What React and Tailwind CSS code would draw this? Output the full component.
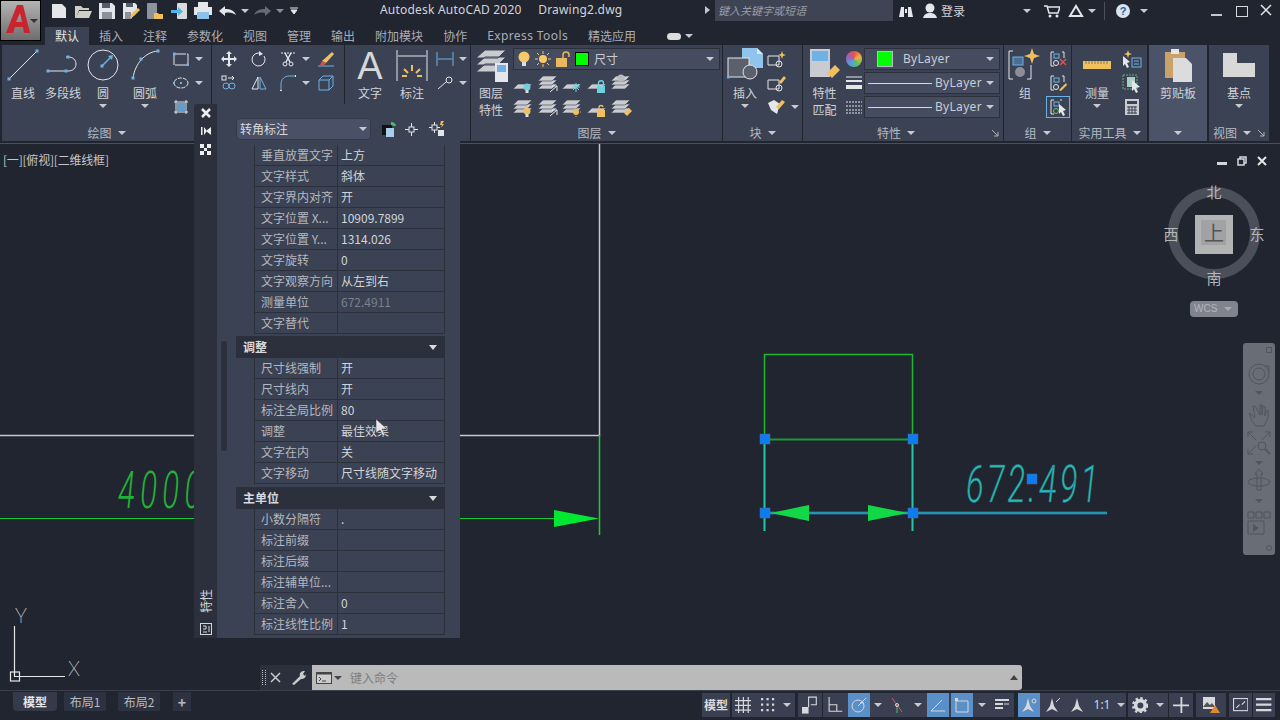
import React from 'react'

const W = '#e4e6ea'
const B = '#6fb1e6'
const Y = '#f0c060'

function S({ w = 20, h = 20, z = 1, children }) {
    return <svg width={w * z} height={h * z} viewBox={`0 0 ${w} ${h}`} fill="none" className="block shrink-0">{children}</svg>
}

function Arrow({ className = 'border-t-[#c8cad0]' }) {
    return <span className={`block w-0 h-0 border-x-[4px] border-x-transparent border-t-[4px] ${className}`} />
}

function Grip({ x, y, s = 3 }) {
    return <rect x={x - s / 2} y={y - s / 2} width={s} height={s} fill={B} />
}

// ----- quick access icons
const qa = [
    <S w={18} h={16}><path d="M2 1h10l4 4v10H2z" fill={W} /></S>,
    <S w={18} h={16}><path d="M1 3h6l2 2h6v2H5l-3 8H1zM5 8h13l-3 7H2z" fill="#cfcfc4" /></S>,
    <S w={18} h={18}><path d="M1 1h13l3 3v13H1z" fill={W} /><rect x="4" y="1" width="8" height="5" fill="#555c6c" /><rect x="4" y="10" width="10" height="7" fill="#8b909b" /></S>,
    <S w={18} h={18}><path d="M1 1h12l2 2v6l-6 8H1z" fill={W} /><rect x="4" y="1" width="7" height="4" fill="#555c6c" /><rect x="3" y="10" width="6" height="7" fill="#8b909b" /><path d="M8 16l2-5 6-5 2 2-6 6z" fill={Y} /></S>,
    <S w={18} h={18}><rect x="1" y="1" width="10" height="16" rx="1" fill="#8d929c" /><path d="M8 11h4l1 1h4v5H8z" fill={Y} /></S>,
    <S w={18} h={18}><rect x="7" y="1" width="10" height="16" rx="1" fill="#d8dadd" /><path d="M1 8h7V5l5 4.500-5 4.500v-3H1z" fill="#55b5e8" /></S>,
    <S w={18} h={18}><rect x="4" y="0" width="10" height="5" fill={W} /><rect x="0" y="5" width="18" height="8" fill={W} /><rect x="3" y="10" width="12" height="7" fill="#8ac2ec" /></S>,
]

function TitleBar() {
    return (
        <div className="h-[27px] flex items-start text-[#d2d4d8] relative">
            <div className="w-[41px] h-[41px] bg-gradient-to-b from-[#b4b4b4] to-[#6e6e6e] border border-black relative z-10 pl-[4px] pt-[3px]">
                <S w={26} h={30}><path d="M1 29L12 1h6l7 28h-6l-1-6h-8l-2 6zM11 18h6l-2-9z" fill="#c8252e" /></S>
                <span className="absolute right-[2px] top-[18px]"><Arrow className="border-t-[#333]" /></span>
            </div>
            <div className="flex items-center h-[21px] ml-[9px] gap-[6px]">{qa}</div>
            <div className="flex items-center h-[21px] ml-[7px] gap-[5px]">
                <S w={17} h={12}><path d="M0 6l6-5v3c5 0 9 1 11 6-3-2-6-3-11-2v3z" fill={W} /></S>
                <Arrow />
                <S w={17} h={12}><path d="M17 6l-6-5v3C6 4 2 5 0 10c3-2 6-3 11-2v3z" fill="#656a77" /></S>
                <Arrow className="border-t-[#8a8d95]" />
                <S w={10} h={10}><path d="M1 2h8M2 4h6L5 8z" stroke={W} fill={W} /></S>
            </div>
            <div className="absolute left-[380px] top-[1px] text-xs leading-[18px] tracking-[0.2px] font-['Noto_Sans',sans-serif] whitespace-pre">Autodesk AutoCAD 2020     Drawing2.dwg</div>
            <div className="absolute left-[705px] top-[6px] w-0 h-0 border-y-[4px] border-y-transparent border-l-[5px] border-l-[#c4c6cc]" />
            <div className="absolute left-[715px] top-0 w-[178px] h-[21px] bg-[#3e4453] pl-[3px] text-[11px] leading-[21px] italic text-[#9a9da5]">键入关键字或短语</div>
            <div className="absolute left-[898px] top-[3px] flex items-center h-[16px]">
                <S w={16} h={14}><path d="M1 13l2-10h3v10zM15 13l-2-10h-3v10zM7 5h2v4H7z" fill={W} /></S>
                <span className="ml-[8px]"><S w={16} h={16}><circle cx="8" cy="5" r="4.500" fill={W} /><path d="M1 15c1-4 4-5 7-5s6 1 7 5z" fill={W} /></S></span>
                <span className="ml-[3px] text-xs">登录</span>
                <span className="ml-[58px]"><Arrow /></span>
                <span className="ml-[13px]"><S w={16} h={14}><path d="M0 2h3l2 7h9l2-6H4" stroke={W} strokeWidth="1.500" /><circle cx="6" cy="12" r="1.500" fill={W} /><circle cx="13" cy="12" r="1.500" fill={W} /></S></span>
                <span className="ml-[8px]"><S w={16} h={14}><path d="M8 2L2 12h12z" stroke={W} strokeWidth="2" /></S></span>
                <span className="ml-[4px]"><Arrow /></span>
                <span className="ml-[8px] w-px h-[18px] bg-[#4a4f5c]" />
                <span className="ml-[11px] w-[14px] h-[14px] rounded-full bg-[#d8e4f2] text-[#2d5a9a] text-[11px] leading-[14px] font-bold text-center font-['Liberation_Sans',sans-serif]">?</span>
                <span className="ml-[10px]"><Arrow /></span>
            </div>
            <div className="absolute left-[1211px] top-[14px] w-[11px] h-[2px] bg-[#c4c6cc]" />
            <div className="absolute left-[1236px] top-[6px] w-[12px] h-[11px] border-[1.500px] border-[#d6d8dc]" />
            <div className="absolute left-[1259px] top-[3px]"><S w={14} h={14}><path d="M2 2l10 10M12 2L2 12" stroke={W} strokeWidth="1.500" /></S></div>
        </div>
    )
}

function TabBar() {
    const tabs = ['默认', '插入', '注释', '参数化', '视图', '管理', '输出', '附加模块', '协作', 'Express Tools', '精选应用']
    return (
        <div className="h-[18px] flex pl-[45px] text-xs leading-[18px] text-[#a9adb6]">
            {tabs.map((t, i) => (
                <div key={t} className={i === 0 ? 'px-[10px] bg-[#3b4253] text-[#e0e2e6]' : t === 'Express Tools' ? "px-[10px] font-['Noto_Sans',sans-serif] tracking-[0.4px]" : 'px-[10px]'}>{t}</div>
            ))}
            <div className="ml-[21px] flex items-center gap-[4px]">
                <span className="w-[14px] h-[7px] rounded-sm bg-[#dcdcdc]" />
                <Arrow />
            </div>
        </div>
    )
}

function Panel({ className, title, corner, children }) {
    return (
        <section className={`h-[96px] bg-[#3b4253] flex flex-col shrink-0 ${className}`}>
            <div className="h-[80px] flex overflow-hidden">{children}</div>
            <div className={corner ? 'h-[16px] flex items-center justify-center gap-[6px] text-xs leading-[16px] text-[#b6b9c0] relative pr-[14px]' : 'h-[16px] flex items-center justify-center gap-[6px] text-xs leading-[16px] text-[#b6b9c0] relative'}>
                {title && <span>{title}</span>}
                <Arrow />
                {corner && <span className="absolute right-[4px] top-[5px]"><S w={7} h={7}><path d="M0 0l6 6M6 2v4H2" stroke="#aeb1b8" /></S></span>}
            </div>
        </section>
    )
}

function Big({ className, icon, label, label2, dd }) {
    return (
        <div className={`flex flex-col items-center shrink-0 text-xs text-[#d0d2d7] ${className}`}>
            <div className="h-[40px] flex items-center justify-center">{icon}</div>
            <div className="h-[16px] leading-[16px] whitespace-nowrap">{label}</div>
            {label2 && <div className="h-[17px] leading-[17px] whitespace-nowrap">{label2}</div>}
            {dd && <div className="h-[10px] flex items-center"><Arrow /></div>}
        </div>
    )
}

function Sm({ children, dd, on }) {
    return (
        <div className="h-[24px] flex items-center relative">
            <div className={on ? 'w-[24px] h-[22px] flex items-center justify-center border border-[#6fb1e6]' : 'w-[24px] h-[22px] flex items-center justify-center'}>{children}</div>
            {dd && <span className="ml-[2px]"><Arrow /></span>}
        </div>
    )
}

// small stacked layer sheet used on the layer panel
function Sheets({ extra, n = 3 }) {
    return (
        <S w={22} h={20}>
            {Array.from({ length: n }).map((_, i) => <path key={i} d={`M1 ${15 - i * 4}L6 ${10 - i * 4}h14L15 ${15 - i * 4}z`} fill="#c9cbd0" stroke="#3b4253" strokeWidth=".6" />)}
            {extra}
        </S>
    )
}

const bulb = (c, x = 15, y = 13) => <g><circle cx={x} cy={y} r="3.500" fill={c} /><rect x={x - 1.500} y={y + 3} width="3" height="3" fill="#ddd" /></g>
const lock = (c, open) => <g><rect x="11" y="12" width="8" height="7" fill={c} /><path d={open ? 'M13 12V9c0-2 4-2 4 0' : 'M12.500 12V9c0-3 5-3 5 0v3'} stroke={c} strokeWidth="1.300" /></g>

function Combo({ className, children }) {
    return <div className={`flex items-center bg-[#454c60] border border-[#2c303b] text-xs text-[#c9ccd2] relative ${className}`}>{children}<span className="absolute right-[5px] top-[8px]"><Arrow /></span></div>
}

function LineRow({ label }) {
    return (
        <Combo className="w-[136px] h-[22px] mb-[2px] pl-[3px]">
            <span className="w-[64px] h-px bg-[#d8dade]" />
            <span className="ml-[3px] font-['Noto_Sans',sans-serif] tracking-[0.3px]">{label}</span>
        </Combo>
    )
}

function Ribbon() {
    return (
        <div className="h-[99px] flex gap-px pl-[2px] border-b border-[#4a4f5c]">
            <Panel className="w-[209px]" title="绘图">
                <Big className="w-[42px]" label="直线" icon={<S w={34} h={34}><path d="M3 31L31 3" stroke={W} /><Grip x={3} y={31} /><Grip x={31} y={3} /></S>} />
                <Big className="w-[38px]" label="多段线" icon={<S w={34} h={24}><path d="M2 18h18M20 18h2c5 0 8-3 8-7s-3-7-8-7h-2" stroke={W} /><Grip x={2} y={18} /><Grip x={20} y={18} /><Grip x={22} y={4} /></S>} />
                <Big className="w-[42px]" label="圆" dd icon={<S w={34} h={34}><circle cx="17" cy="17" r="15" stroke={W} /><path d="M16 18l9-9" stroke={B} strokeWidth="1.500" /><path d="M27 7l-5 1 4 4z" fill={B} /><Grip x={16} y={18} /></S>} />
                <Big className="w-[42px]" label="圆弧" dd icon={<S w={32} h={34}><path d="M4 30C6 16 16 4 29 3" stroke={W} /><Grip x={4} y={30} /><Grip x={12} y={11} /><Grip x={29} y={3} /></S>} />
                <div className="ml-[3px] pt-[2px]">
                    <Sm dd><S w={16} h={14}><path d="M1 2h14v11H1z" stroke={W} strokeDasharray="12 1" /><Grip x={1} y={2} /><Grip x={15} y={13} /></S></Sm>
                    <Sm dd><S w={16} h={12}><ellipse cx="8" cy="6" rx="7" ry="5" stroke={W} strokeDasharray="4 1" /><Grip x={8} y={6} s={2} /><Grip x={1} y={6} s={2} /></S></Sm>
                    <Sm><S w={16} h={16}><path d="M1 3h14M1 13h14M3 1v14M13 1v14" stroke={W} /><rect x="4" y="4" width="8" height="8" fill={B} opacity=".8" /></S></Sm>
                </div>
            </Panel>
            <Panel className="w-[132px]">
                <div className="grid grid-cols-[30px_30px_38px_28px] content-start pl-[2px] pt-[2px] justify-items-center">
                    <Sm><S w={16} h={16}><path d="M8 0l3 3H9v4h4V5l3 3-3 3V9H9v4h2l-3 3-3-3h2V9H3v2L0 8l3-3v2h4V3H5z" fill={W} /></S></Sm>
                    <Sm><S w={16} h={16}><path d="M13 5a6.500 6.500 0 1 1-3-2.500" stroke={W} /><path d="M8 0l4 3-4 2z" fill={W} /></S></Sm>
                    <Sm dd><S w={16} h={16}><path d="M1 2h14" stroke={W} strokeDasharray="2 1" /><path d="M5 2l5 9M11 2L6 11" stroke={W} strokeWidth="1.500" /><circle cx="5" cy="13" r="2" stroke={W} /><circle cx="11" cy="13" r="2" stroke={W} /></S></Sm>
                    <Sm><S w={16} h={16}><path d="M14 1l2 2-8 9-4-2z" fill={Y} /><path d="M4 10l4 2-2 2H2z" fill="#d8534a" /><path d="M0 15h16" stroke={B} /></S></Sm>
                    <Sm><S w={16} h={16}><circle cx="5" cy="11" r="3" stroke={B} /><circle cx="11" cy="11" r="3" stroke={B} /><rect x="1" y="1" width="4" height="4" stroke={W} /><path d="M7 3h6l-2-2M13 3l-2 2" stroke={W} /></S></Sm>
                    <Sm><S w={16} h={16}><path d="M7 2L1 14h6z" stroke={W} /><path d="M9 2l6 12H9z" stroke={B} /></S></Sm>
                    <Sm dd><S w={16} h={16}><path d="M1 15V9c0-5 4-8 8-8h6" stroke={B} /><path d="M1 15v1M15 1h1" stroke={W} strokeWidth="2" /></S></Sm>
                    <Sm><S w={16} h={16}><path d="M1 5h10v10H1zM1 5l4-4h10v10l-4 4M11 5l4-4" stroke={B} /></S></Sm>
                </div>
            </Panel>
            <Panel className="w-[125px]">
                <Big className="w-[50px]" label="文字" icon={<span className="self-end text-[#d6d7d9] text-[38px] leading-[38px] font-['Liberation_Sans',sans-serif]">A</span>} />
                <Big className="w-[34px]" label="标注" icon={<S w={32} h={32}><path d="M1 1v31M31 1v31M2 7h28" stroke={W} /><path d="M16 16v6M8 20l4 4M24 20l-4 4M6 27h5M21 27h5" stroke={Y} strokeWidth="2" /></S>} />
                <div className="ml-[4px] pt-[2px]">
                    <Sm dd><S w={18} h={14}><path d="M1 0v14M17 0v14M2 7h14" stroke={B} /></S></Sm>
                    <Sm dd><S w={18} h={16}><circle cx="13" cy="5" r="3" stroke={W} /><path d="M10 7l-8 7" stroke={W} /></S></Sm>
                </div>
            </Panel>
            <Panel className="w-[251px]" title="图层">
                <Big className="w-[40px]" label="图层" label2="特性" icon={<S w={34} h={34}><path d="M2 24l9-8h21l-8 8zM2 17l9-8h21l-8 8zM2 10l9-8h21l-8 8z" fill="#c9cbd0" stroke="#3b4253" /><rect x="21" y="15" width="13" height="19" fill={W} /><rect x="23" y="17" width="9" height="7" fill={B} /></S>} />
                <div className="ml-[2px] pt-[3px]">
                    <Combo className="w-[207px] h-[22px] pl-[3px] gap-[4px]">
                        <S w={14} h={16}><circle cx="7" cy="6" r="5.500" fill="#f5c96a" /><rect x="5" y="11" width="4" height="4" fill="#ddd" /></S>
                        <S w={16} h={16}><circle cx="8" cy="8" r="4" fill="#f5c96a" /><path d="M8 0v3M8 13v3M0 8h3M13 8h3M2 2l2 2M12 12l2 2M14 2l-2 2M2 14l2-2" stroke="#f5c96a" /></S>
                        <S w={16} h={16}><rect x="1" y="7" width="11" height="9" fill="#e8b860" /><path d="M8 7V4c0-4 6-4 6 0v2" stroke="#e8b860" strokeWidth="1.500" /></S>
                        <span className="w-[14px] h-[14px] bg-[#00ff00] border border-black" />
                        <span className="ml-[1px]">尺寸</span>
                    </Combo>
                    <div className="grid grid-cols-5 w-[123px] -ml-[2px] pt-[2px]">
                        <Sm><Sheets n={1} extra={bulb('#6fd0e0')} /></Sm>
                        <Sm><Sheets extra={<path d="M13 18l7-6M20 12v5M20 12h-5" stroke={W} />} /></Sm>
                        <Sm><Sheets n={1} extra={<path d="M15 9v9M11 13h8M12 10l6 6M18 10l-6 6" stroke="#6fd0e0" />} /></Sm>
                        <Sm><Sheets n={1} extra={lock('#6fd0e0')} /></Sm>
                        <Sm><Sheets extra={<circle cx="11" cy="4" r="3.500" fill="#b9bcc2" />} /></Sm>
                        <Sm><Sheets extra={bulb(Y)} /></Sm>
                        <Sm><Sheets extra={<path d="M13 18l7-6M20 12v5M20 12h-5" stroke={W} />} /></Sm>
                        <Sm><Sheets extra={<g><circle cx="15" cy="14" r="3" fill={Y} /><path d="M15 9v10M10 14h10" stroke={Y} strokeDasharray="1.500 1.500" /></g>} /></Sm>
                        <Sm><Sheets n={1} extra={lock(Y, true)} /></Sm>
                        <Sm><Sheets extra={<path d="M14 15l5-5 3 3-5 5z" fill={Y} />} /></Sm>
                    </div>
                </div>
            </Panel>
            <Panel className="w-[79px]" title="块">
                <Big className="w-[44px]" label="插入" dd icon={<S w={36} h={38}><path d="M15 2h15l6 6v14H15z" fill="#8fc4ec" /><path d="M30 2l6 6h-6z" fill="#d8e8f4" /><rect x="1" y="12" width="21" height="19" fill="#5b606c" stroke={W} /><circle cx="23" cy="26" r="7" fill="#5b606c" stroke={W} /><Grip x={1} y={31} /></S>} />
                <div className="-ml-[2px] pt-[2px]">
                    <Sm><S w={20} h={18}><path d="M1 6h11v9H1z" stroke={W} /><circle cx="12" cy="14" r="3" stroke={W} /><path d="M15 1l1 3 3 1-3 1-1 3-1-3-3-1 3-1z" fill={Y} /></S></Sm>
                    <Sm><S w={20} h={18}><path d="M1 6h11v9H1z" stroke={W} /><circle cx="12" cy="14" r="3" stroke={W} /><path d="M12 8l5-6 2 2-5 6z" fill={Y} /></S></Sm>
                    <Sm dd><S w={20} h={18}><path d="M1 5l6-3 6 4-3 10-6-4z" fill={W} /><path d="M9 9l6-7 3 2-6 7z" fill={Y} /></S></Sm>
                </div>
            </Panel>
            <Panel className="w-[200px]" title="特性" corner>
                <Big className="w-[43px]" label="特性" label2="匹配" icon={<S w={32} h={32}><rect x="1" y="0" width="20" height="28" fill="#c9cbd0" /><rect x="3" y="2" width="16" height="10" fill={B} /><path d="M18 24l8-8 5 5-8 8z" fill={Y} /></S>} />
                <div className="w-[18px] -ml-[1px] pt-[2px] flex flex-col items-center">
                    <div className="h-[24px] flex items-center"><span className="w-[16px] h-[16px] rounded-full bg-[conic-gradient(#e8504a,#f0b040,#60c060,#50a0e0,#a060c0,#e8504a)]" /></div>
                    <div className="h-[24px] flex items-center"><S w={16} h={16}><path d="M0 2h16" stroke={W} /><path d="M0 6h16" stroke={W} strokeWidth="2" /><path d="M0 12h16" stroke={W} strokeWidth="4" /></S></div>
                    <div className="h-[24px] flex items-center"><S w={16} h={14}><path d="M0 2h16M0 6h16M0 10h16M0 13h16" stroke={W} strokeDasharray="2 1" /></S></div>
                </div>
                <div className="ml-[1px] pt-[3px]">
                    <Combo className="w-[136px] h-[22px] mb-[2px] pl-[12px]">
                        <span className="w-[16px] h-[16px] bg-[#00ff00] border border-[#b8bcc4]" />
                        <span className="ml-[10px] font-['Noto_Sans',sans-serif] tracking-[0.3px]">ByLayer</span>
                    </Combo>
                    <LineRow label="ByLayer" />
                    <LineRow label="ByLayer" />
                </div>
            </Panel>
            <Panel className="w-[67px]" title="组">
                <Big className="w-[42px]" label="组" icon={<S w={34} h={34}><path d="M5 3H1v28h4M19 31h4V17" stroke={W} /><rect x="5" y="9" width="10" height="8" fill="#4a6f94" stroke={B} /><circle cx="12" cy="24" r="5" fill="#8b8f98" /><path d="M24 0l2 6 6 2-6 2-2 6-2-6-6-2 6-2z" fill={Y} /></S>} />
                <div className="pt-[2px]">
                    <Sm><S w={18} h={18}><path d="M2 2h3M2 16h3M2 2v14M15 2h-2M15 2v6" stroke={W} /><rect x="5" y="4" width="5" height="4" stroke={B} /><circle cx="7" cy="13" r="2.500" stroke={W} /><path d="M11 9l6 6M17 9l-6 6" stroke="#e05050" strokeWidth="1.500" /></S></Sm>
                    <Sm><S w={18} h={18}><path d="M2 2h3M2 16h3M2 2v14M15 2h-2M15 2v6" stroke={W} /><rect x="5" y="4" width="5" height="4" stroke={B} /><circle cx="7" cy="13" r="2.500" stroke={W} /><path d="M10 16l7-7 1 2-6 6z" fill={Y} /></S></Sm>
                    <Sm on><S w={18} h={18}><path d="M2 2h3M2 16h3M2 2v14M11 2h2" stroke={W} /><rect x="5" y="4" width="5" height="4" stroke={B} /><circle cx="7" cy="13" r="2.500" stroke="#70c070" /><path d="M10 6l7 6-3 1 2 4-2 1-2-4-2 2z" fill={W} /></S></Sm>
                </div>
            </Panel>
            <Panel className="w-[75px]" title="实用工具">
                <Big className="w-[50px]" label="测量" dd icon={<S w={30} h={10}><rect x="1" y="1" width="28" height="8" fill={Y} /><path d="M4 1v3M7 1v3M10 1v3M13 1v3M16 1v3M19 1v3M22 1v3M25 1v3" stroke="#8a7a50" /></S>} />
                <div className="pt-[2px] -ml-[2px]">
                    <Sm><S w={20} h={18}><path d="M1 6l7 6-3 1 2 4-2 1-2-4-2 2z" fill={W} /><rect x="10" y="8" width="9" height="9" stroke={B} /><path d="M12 11h5M12 14h5" stroke={B} /><path d="M6 0l1 3 3 1-3 1-1 3-1-3-3-1 3-1z" fill={Y} /></S></Sm>
                    <Sm><S w={20} h={20}><rect x="1" y="2" width="14" height="14" stroke="#60b080" strokeDasharray="2 1" /><rect x="5" y="4" width="8" height="10" fill="#a8cfc0" /><path d="M10 7l8 7-4 1 2 4-2 1-2-4-2 2z" fill={W} /></S></Sm>
                    <Sm><S w={14} h={16}><rect x="0" y="0" width="14" height="16" fill="#c9cbd0" /><rect x="2" y="2" width="10" height="3" fill="#3b4253" /><path d="M2 8h10M2 11h10M2 14h10M4 7v8M7 7v8M10 7v8" stroke="#3b4253" /></S></Sm>
                </div>
            </Panel>
            <Panel className="w-[58px] ml-px !bg-[#4a5368]">
                <Big className="w-full" label="剪贴板" icon={<S w={28} h={34}><rect x="1" y="4" width="20" height="26" fill="#c8a268" /><rect x="7" y="1" width="8" height="5" fill={W} /><path d="M9 10h13l6 6v18H9z" fill="#dcdcdc" /></S>} />
            </Panel>
            <Panel className="w-[60px] ml-px" title="视图" corner>
                <Big className="w-full" label="基点" dd icon={<S w={34} h={26}><path d="M1 1h14v10h18v14H1z" fill="#d8d8d8" /></S>} />
            </Panel>
        </div>
    )
}

function Row({ label, value, dim }) {
    return (
        <div className="h-[21px] ml-[18px] flex border-b border-l border-[#2c303b] text-xs leading-[20px]">
            <div className="w-[83px] pl-[6px] border-r border-[#2c303b] text-[#b4b7be] whitespace-nowrap overflow-hidden">{label}</div>
            <div className={dim ? 'flex-1 pl-[3px] text-[#7d818b] border-r border-[#2c303b]' : 'flex-1 pl-[3px] text-[#d2d4d8] border-r border-[#2c303b] whitespace-nowrap overflow-hidden'}>{value}</div>
        </div>
    )
}

function Head({ label, className }) {
    return (
        <div className={`h-[22px] bg-[#2b303c] flex items-center justify-between pl-[7px] pr-[8px] text-xs font-bold text-[#d8dade] ${className}`}>
            {label}
            <span className="block w-0 h-0 border-x-[4px] border-x-transparent border-t-[5px] border-t-[#d8dade]" />
        </div>
    )
}

function Palette() {
    const a = [['垂直放置文字', '上方'], ['文字样式', '斜体'], ['文字界内对齐', '开'], ['文字位置 X...', '10909.7899'], ['文字位置 Y...', '1314.026'], ['文字旋转', '0'], ['文字观察方向', '从左到右'], ['测量单位', '672.4911', true], ['文字替代', '']]
    const b = [['尺寸线强制', '开'], ['尺寸线内', '开'], ['标注全局比例', '80'], ['调整', '最佳效果'], ['文字在内', '关'], ['文字移动', '尺寸线随文字移动']]
    const c = [['小数分隔符', '.'], ['标注前缀', ''], ['标注后缀', ''], ['标注辅单位...', ''], ['标注舍入', '0'], ['标注线性比例', '1']]
    return (
        <div className="absolute left-[194px] top-[104px] w-[266px] h-[534px] flex bg-[#2b303c] rounded-t-[3px] z-10">
            <div className="w-[24px] flex flex-col items-center relative">
                <div className="h-[17px] flex items-center"><S w={10} h={10}><path d="M1 1l8 8M9 1L1 9" stroke="#eee" strokeWidth="2.500" /></S></div>
                <div className="h-[19px] flex items-center"><S w={10} h={10}><path d="M0 1v8h1.500V1zM10 1L5 5l5 4zM3 1l3 4-3 4z" fill="#eee" /></S></div>
                <div className="h-[19px] flex items-center"><S w={11} h={11}><path d="M0 0h4v4H0zM7 0h4v4H7zM0 7h4v4H0zM7 7h4v4H7zM4 4h3v3H4z" fill="#eee" /></S></div>
                <div className="absolute top-[485px] left-[5px] [writing-mode:vertical-rl] [text-orientation:sideways] rotate-180 text-xs leading-[14px] text-[#d4d6da]">特性</div>
                <div className="absolute top-[519px] left-[6px]"><S w={12} h={12}><rect x=".5" y=".5" width="11" height="11" stroke="#d4d6da" /><path d="M3 3h3v3H3M9 3v6M3 9h4" stroke="#d4d6da" /></S></div>
            </div>
            <div className="flex-1 bg-[#3b4253] relative pt-[14px] pl-[19px] pr-[15px]">
                <div className="absolute left-[4px] top-[237px] w-[6px] h-[110px] bg-[#2b303c] rounded-sm" />
                <div className="flex items-center h-[22px]">
                    <div className="w-[135px] h-[22px] bg-[#4a5166] border border-[#343947] rounded-sm pl-[3px] text-xs leading-[20px] text-[#d8dade] relative">
                        转角标注
                        <span className="absolute right-[3px] top-[8px]"><Arrow /></span>
                    </div>
                    <span className="ml-[11px]"><S w={15} h={15}><rect x="0" y="3" width="10" height="10" fill="#111" /><rect x="4" y="6" width="8" height="9" fill="#a9cdec" /><path d="M9 0c3 0 5 2 5 4h-2l-3-1z" fill="#40c060" /></S></span>
                    <span className="ml-[8px]"><S w={13} h={13}><rect x="4" y="4" width="5" height="5" stroke={W} /><path d="M6.500 0v4M6.500 9v4M0 6.500h4M9 6.500h4" stroke={W} /></S></span>
                    <span className="ml-[11px]"><S w={16} h={16}><rect x="3" y="4" width="5" height="5" stroke={W} /><path d="M5.500 1v3M5.500 9v3M0 6.500h3M8 6.500h3" stroke={W} /><rect x="9" y="9" width="6" height="6" fill={W} /><path d="M12 0h3l-2 3h2l-3 4 1-3h-2z" fill={Y} /></S></span>
                </div>
                <div className="mt-[5px]">
                    {a.map(r => <Row key={r[0]} label={r[0]} value={r[1]} dim={r[2]} />)}
                    <Head label="调整" className="mt-[2px]" />
                    {b.map(r => <Row key={r[0]} label={r[0]} value={r[1]} />)}
                    <Head label="主单位" className="mt-[3px]" />
                    {c.map(r => <Row key={r[0]} label={r[0]} value={r[1]} />)}
                </div>
                <div className="absolute left-[158px] top-[314px]"><S w={14} h={20}><path d="M1 1v14l4-3 3 6 2-1-3-6h5z" fill="#e8e8e8" stroke="#333" strokeWidth=".5" /></S></div>
            </div>
        </div>
    )
}

// drawing area, coordinates are page pixels minus the 144px of the header
function Drawing() {
    const sel = (d) => <g><path d={d} stroke="#2a66a8" strokeWidth="3" /><path d={d} stroke="#22c8a8" strokeWidth="1" /></g>
    const grip = (x, y) => <rect x={x - 5} y={y - 5 - 144} width="10" height="10" fill="#0f7bf0" stroke="#4a6a90" strokeWidth=".5" />
    return (
        <svg width="1280" height="546" viewBox="0 0 1280 546" fill="none" className="absolute left-0 top-0">
            <path d="M0 291.500h599.500V0" stroke="#c6c8cc" strokeWidth="1.500" />
            <path d="M599.500 291v100" stroke="#18d030" strokeWidth="1.500" />
            <path d="M0 374.500h555" stroke="#19c832" strokeWidth="1.200" />
            <path d="M554 366l45 8.500-45 8.500z" fill="#00e832" />
            <text transform="translate(118 364) scale(.6 1)" fill="#22b038" fontSize="52" fontStyle="italic" fontWeight="300" fontFamily="Roboto, sans-serif" letterSpacing="9">4000</text>
            <path d="M764.500 295V210.500H912.500V295" stroke="#1cb830" strokeWidth="1.500" />
            <path d="M765 295.500H913" stroke="#1a9a34" strokeWidth="2" />
            {sel('M764.500 295V387M912.500 295V387M765 369H1107')}
            <path d="M771 369l38-8v16zM908 369l-40-8v16z" fill="#12d848" />
            <text transform="translate(966 358) scale(.63 1)" fontSize="52" fontStyle="italic" fontWeight="300" fontFamily="Roboto, sans-serif" letterSpacing="5" fill="#26c0a0" stroke="#2a66a8" strokeWidth=".5">672.491</text>
            {grip(765, 439)}{grip(913, 439)}{grip(765, 513)}{grip(913, 513)}{grip(1032, 479)}
            <g stroke="#e6e6e6" strokeWidth="1.200">
                <path d="M14.500 482V532.500H65" />
                <rect x="10.500" y="528" width="9" height="9" />
            </g>
            <text x="15" y="479" fill="#e6e6e6" fontSize="20" fontWeight="100" fontFamily="Roboto, sans-serif">Y</text>
            <text x="68" y="532" fill="#e6e6e6" fontSize="20" fontWeight="100" fontFamily="Roboto, sans-serif">X</text>
        </svg>
    )
}

function ViewCube() {
    return (
        <div className="absolute left-[1160px] top-[34px] w-[110px] h-[140px]">
            <svg width="110" height="114" viewBox="0 0 110 114" fill="none">
                <circle cx="54" cy="55" r="41" stroke="#4b4f59" strokeWidth="10" />
                <rect x="35" y="37" width="38" height="39" fill="#b2b4b4" />
                <rect x="41" y="42" width="25" height="25" fill="#a0a2a6" />
                <g fill="#b4b6ba" fontSize="15" textAnchor="middle" fontFamily="'Noto Sans CJK SC', sans-serif">
                    <text x="54" y="20">北</text>
                    <text x="54" y="106">南</text>
                    <text x="11" y="62">西</text>
                    <text x="97" y="62">东</text>
                </g>
                <text x="54" y="63" fill="#555" fontSize="20" textAnchor="middle" fontFamily="'Noto Sans CJK SC', sans-serif">上</text>
            </svg>
            <div className="absolute left-[30px] top-[123px] w-[48px] h-[16px] bg-[#81838f] rounded-[4px] pl-[4px] text-[10px] leading-[16px] text-[#b4b6be] font-['Liberation_Sans',sans-serif]">
                WCS
                <span className="absolute right-[6px] top-[6px]"><Arrow className="border-t-[#a8aab4]" /></span>
            </div>
        </div>
    )
}

function NavBar() {
    const c = '#52555e'
    return (
        <div className="absolute left-[1243px] top-[199px] w-[32px] h-[212px] bg-[#696d76] rounded-[3px] flex flex-col items-center pt-[19px]">
            <span className="absolute right-[3px] top-[4px] w-[6px] h-[6px] border border-[#52555e]" />
            <S w={24} h={24}><circle cx="12" cy="12" r="10" stroke={c} /><circle cx="12" cy="12" r="6" stroke={c} /><path d="M18 4h4v7" stroke={c} /></S>
            <span className="mt-[5px]"><Arrow className="border-t-[#52555e]" /></span>
            <span className="mt-[8px]"><S w={24} h={24}><path d="M5 12L2 10l3 8 4 5h8l4-8V7l-2 1-1 5V4l-2-1-1 9V2h-2v10L8 3H6l2 11-1 1z" stroke={c} /></S></span>
            <span className="mt-[4px]"><S w={24} h={24}><path d="M1 1l8 8M1 1v5M1 1h5M23 1l-8 8M23 1v5M23 1h-5M1 23l8-8M1 23v-5M1 23h5" stroke={c} /><circle cx="15" cy="15" r="4" stroke={c} /><path d="M18 18l5 5" stroke={c} strokeWidth="2" /></S></span>
            <span className="mt-[6px]"><Arrow className="border-t-[#52555e]" /></span>
            <span className="mt-[3px]"><S w={24} h={24}><path d="M12 1l4 5h-2v16h-4V6H8z" stroke={c} /><ellipse cx="12" cy="14" rx="11" ry="4" stroke={c} /></S></span>
            <span className="mt-[7px]"><Arrow className="border-t-[#52555e]" /></span>
            <span className="mt-[8px]"><S w={24} h={24}><path d="M1 1h6v6H1zM9 1h6v6H9zM17 1h6v6h-6zM1 10h16v13H1z" stroke={c} /><path d="M6 13l6 4-6 4z" fill={c} /></S></span>
            <span className="absolute right-[3px] bottom-[4px] w-[6px] h-[6px] border border-[#52555e] rounded-full" />
        </div>
    )
}

function CommandLine() {
    return (
        <div className="absolute left-[260px] top-[521px] w-[762px] h-[25px] flex z-10">
            <div className="w-[52px] bg-[#2b303c] flex items-center">
                <span className="ml-[2px] w-[4px] h-[15px] border-x border-dotted border-[#b8bac0]" />
                <span className="ml-[4px]"><S w={11} h={11}><path d="M1 1l9 9M10 1L1 10" stroke="#c8cace" strokeWidth="1.500" /></S></span>
                <span className="ml-[10px]"><S w={15} h={15}><path d="M1 14l8-8c-1-3 1-5 5-5l-2 3 2 2 1-2c0 4-2 5-5 5l-7 6z" fill="#c8cace" /></S></span>
            </div>
            <div className="flex-1 bg-[#bababa] rounded-r-[3px] flex items-center pl-[4px] relative text-xs text-[#7e7e7e]">
                <S w={16} h={12}><rect x=".5" y=".5" width="15" height="11" fill="#ccc" stroke="#444" /><rect x=".5" y=".5" width="15" height="2" fill="#444" /><path d="M3 5l2 2-2 2M6 9h4" stroke="#444" /></S>
                <span className="ml-[2px]"><Arrow className="border-t-[#444]" /></span>
                <span className="ml-[8px]">键入命令</span>
                <span className="absolute right-[4px] top-[10px] w-0 h-0 border-x-[4px] border-x-transparent border-b-[5px] border-b-[#444]" />
            </div>
        </div>
    )
}

function St({ className, children, on }) {
    return <div className={`h-[24px] flex items-center justify-center shrink-0 ${on ? 'bg-[#5b8fc8]' : ''} ${className}`}>{children}</div>
}

function Dd({ className }) {
    return <div className={`h-[24px] flex items-center justify-center shrink-0 ${className}`}><Arrow /></div>
}

function StatusBar() {
    const L = '#d6d8dc'
    const anno = 'M7 1l2 8 4 6-6-3-6 3 4-6z'
    return (
        <div className="h-[30px] border-t border-[#3a3f4c] flex items-start relative text-xs">
            <div className="flex items-center mt-[1px] pl-[13px] text-[#b8bac0]">
                <div className="h-[19px] w-[44px] bg-[#343a49] rounded-b flex items-center justify-center font-bold text-[#e4e6ea]">模型</div>
                <div className="h-[19px] w-[42px] flex items-center justify-center bg-[#2d3240] ml-[7px]">布局1</div>
                <div className="h-[19px] w-[42px] flex items-center justify-center bg-[#2d3240] ml-[12px]">布局2</div>
                <div className="h-[19px] w-[18px] flex items-center justify-center bg-[#2d3240] ml-[13px] font-bold text-sm">+</div>
            </div>
            <div className="ml-auto mr-[5px] mt-[2px] flex items-center">
                <St className="w-[28px] bg-[#3a4051] font-bold text-[#d8dade]">模型</St>
                <div className="flex bg-[#3a4051] w-[63px] ml-[2px] items-center">
                    <St className="w-[22px]"><S w={14} h={14} z={1.2}><path d="M3 0v14M7 0v14M11 0v14M0 3h14M0 7h14M0 11h14" stroke={L} /></S></St>
                    <St className="w-[22px] ml-[3px]"><S w={12} h={12} z={1.1}><path d="M0 1h12M0 6h12M0 11h12" stroke={L} strokeWidth="2" strokeDasharray="2 3" /></S></St>
                    <Dd className="w-[16px]" />
                </div>
                <St className="w-[24px] ml-[3px] bg-[#3a4051]"><S w={14} h={16} z={1.1}><rect x="0" y="10" width="6" height="6" fill={L} /><path d="M6 10V1h7v7H8" stroke={L} /></S></St>
                <div className="flex bg-[#3a4051] items-center ml-px">
                    <St className="w-[25px]"><S w={14} h={14} z={1.1}><path d="M1 0v13h12M1 7h7v6" stroke={L} /></S></St>
                    <St on className="w-[22px]"><S w={16} h={16}><circle cx="7" cy="9" r="6" stroke={L} /><path d="M7 9l8-8M9 6h4" stroke={L} /></S></St>
                    <Dd className="w-[16px]" />
                    <St className="w-[22px]"><S w={12} h={16}><path d="M1 1l10 14" stroke="#d05a60" /><path d="M6 8v8" stroke="#50c060" /><circle cx="6" cy="8" r="1.500" stroke={L} /></S></St>
                    <Dd className="w-[19px]" />
                    <St on className="w-[22px]"><S w={16} h={14}><path d="M1 13h14M1 13L12 2" stroke={L} /></S></St>
                    <St on className="w-[22px] ml-[2px]"><S w={14} h={16}><path d="M1 4h12v11H1z" stroke={L} /><rect x="0" y="1" width="3" height="3" fill={L} /></S></St>
                    <Dd className="w-[17px]" />
                    <St className="w-[24px]"><S w={14} h={12}><path d="M0 1h14M0 5h8M0 9h8" stroke={L} strokeWidth="2" /><path d="M9 5h5" stroke={L} /></S></St>
                </div>
                <div className="flex bg-[#3a4051] items-center ml-[4px]">
                    <St on className="w-[22px]"><S w={16} h={16}><path d={anno} fill={L} /><circle cx="13" cy="4" r="2" stroke={L} /></S></St>
                    <St className="w-[25px]"><S w={16} h={16}><path d={anno} fill={L} /><path d="M11 5l4-4" stroke={L} /></S></St>
                    <St className="w-[24px]"><S w={14} h={16}><path d={anno} fill={L} /></S></St>
                    <span className="w-[26px] text-[#d4d6da] text-center font-['Noto_Sans',sans-serif]">1:1</span>
                    <Dd className="w-[11px]" />
                </div>
                <div className="flex bg-[#3a4051] items-center ml-[2px]">
                    <St className="w-[24px]"><S w={14} h={14} z={1.2}><circle cx="7" cy="7" r="4" stroke={L} strokeWidth="3" /><circle cx="7" cy="7" r="6" stroke={L} strokeWidth="2" strokeDasharray="2 2" /></S></St>
                    <Dd className="w-[16px]" />
                </div>
                <St className="w-[24px] bg-[#3a4051] ml-px"><S w={14} h={14} z={1.2}><path d="M7 0v14M0 7h14" stroke={L} strokeWidth="1.500" /></S></St>
                <St className="w-[30px] bg-[#3a4051] ml-[3px]"><S w={18} h={18}><rect x="1" y="1" width="12" height="12" fill={L} /><path d="M1 11l4-5 3 3 2-2 3 4z" fill="#555" /><path d="M13 9l5 8H8z" fill="#e08a30" /></S></St>
                <St className="w-[23px] bg-[#3a4051] ml-[3px]"><S w={14} h={12} z={1.1}><rect x=".5" y=".5" width="13" height="11" stroke={L} /><path d="M3 9l3-3M8 6l3-3" stroke={L} /></S></St>
                <St className="w-[22px] bg-[#3a4051] ml-px"><S w={14} h={12} z={1.1}><path d="M0 1h14M0 6h14M0 11h14" stroke={L} strokeWidth="2" /></S></St>
            </div>
        </div>
    )
}

export default function App() {
    return (
        <div className="w-[1280px] h-[720px] bg-[#212530] overflow-hidden relative flex flex-col font-['Noto_Sans_CJK_SC','Noto_Sans',sans-serif]">
            <TitleBar />
            <TabBar />
            <Ribbon />
            <div className="h-[546px] relative shrink-0">
                <Drawing />
                <div className="absolute left-[3px] top-[8px] text-xs leading-[16px] tracking-[-0.2px] text-[#c4c6cc]">[一][俯视][二维线框]</div>
                <div className="absolute left-[1217px] top-[12px] flex items-center gap-[10px]">
                    <span className="w-[10px] h-[3px] bg-[#d4d6da] mt-[5px]" />
                    <S w={10} h={10}><path d="M3 3V1h6v6H7M1 3h6v6H1z" stroke="#d4d6da" strokeWidth="1.500" /></S>
                    <S w={10} h={10}><path d="M1 1l8 8M9 1L1 9" stroke="#e6e6e6" strokeWidth="2" /></S>
                </div>
                <ViewCube />
                <NavBar />
                <CommandLine />
            </div>
            <Palette />
            <StatusBar />
        </div>
    )
}
